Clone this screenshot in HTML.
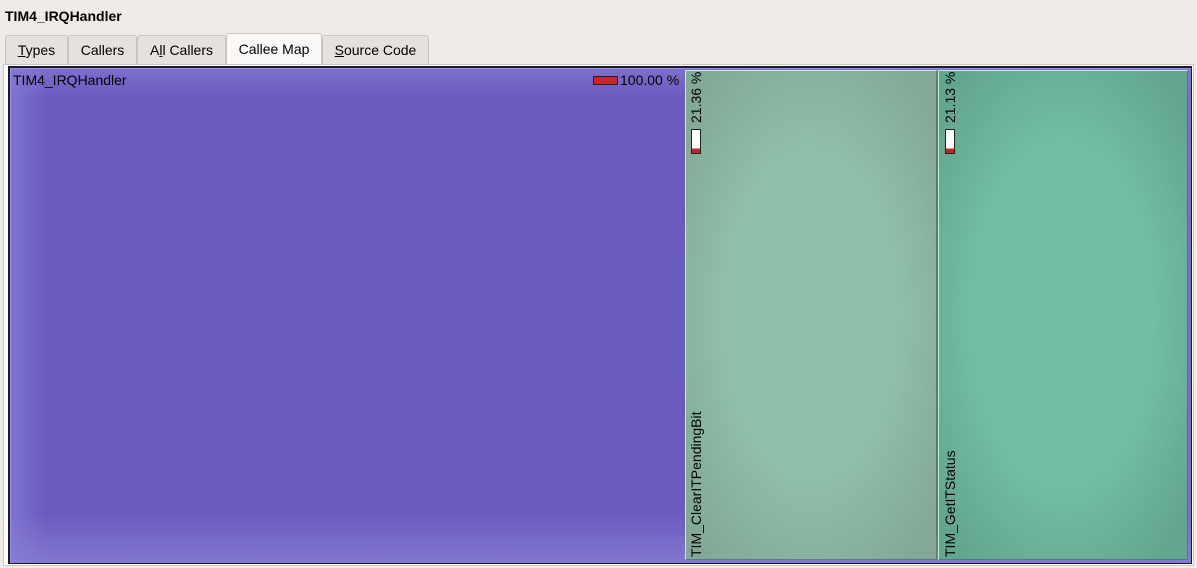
<!DOCTYPE html><html><head><style>
body{margin:0;width:1197px;height:568px;background:#efebe7;font-family:"Liberation Sans","DejaVu Sans",sans-serif;position:relative;overflow:hidden;color:#000}
.title{position:absolute;left:5px;top:8px;font-size:14px;font-weight:bold}
.tab{position:absolute;top:35px;height:29px;border:1px solid #c8c4bf;border-bottom:none;border-radius:3px 3px 0 0;background:#e5e1dd;font-size:14px;text-align:center;line-height:29px;box-sizing:border-box}
.tab.act{top:33px;height:32px;background:#fbfaf9;line-height:30px}
.frame{position:absolute;left:3px;top:64px;width:1191px;height:502px;border:1px solid #c9c5c0;box-sizing:border-box;background:#fff}
.map{position:absolute;left:8px;top:66px;width:1184px;height:498px;border:2px solid #1a1a2a;box-sizing:border-box;background:#6a5bbf}
.cush{position:absolute}
.p{left:0;top:0;width:1180px;height:494px;background:linear-gradient(90deg,rgba(140,130,215,.6),rgba(0,0,0,0) 3%,rgba(0,0,0,0) 97%,rgba(140,130,215,.5)),linear-gradient(180deg,rgba(140,130,215,.5),rgba(0,0,0,0) 6%,rgba(0,0,0,0) 90%,rgba(140,130,215,.7)),#6a5bbf;border-left:1px solid #9a8fe0;border-top:1px solid #9a8fe0}
.g1{left:675px;top:2px;width:252px;height:490px;background:radial-gradient(ellipse 65% 62% at 50% 50%,#8fbea9 55%,#82a996 100%);border:1px solid #cfe8dc;border-right-color:#5f7d6d;border-bottom-color:#5f7d6d;box-sizing:border-box}
.g2{left:928px;top:2px;width:250px;height:490px;background:radial-gradient(ellipse 65% 62% at 50% 50%,#72bea4 55%,#63a68e 100%);border:1px solid #c7eadd;border-right-color:#4e7f6d;border-bottom-color:#4e7f6d;box-sizing:border-box}
.lbl{font-size:14px;position:absolute;white-space:nowrap}
.v{transform:rotate(-90deg);transform-origin:0 0}
.bar{position:absolute;border:1px solid #222;background:#fff;box-sizing:border-box}
</style></head><body>
<div class="title">TIM4_IRQHandler</div>
<div class="tab" style="left:5px;width:63px"><u>T</u>ypes</div>
<div class="tab" style="left:68px;width:69px">Callers</div>
<div class="tab" style="left:137px;width:89px">A<u>l</u>l Callers</div>
<div class="tab act" style="left:226px;width:96px">Callee Map</div>
<div class="tab" style="left:322px;width:107px"><u>S</u>ource Code</div>
<div class="frame"></div>
<div class="map">
 <div class="cush p"></div>
 <div class="lbl" style="left:3px;top:4px">TIM4_IRQHandler</div>
 <div class="bar" style="left:583px;top:8px;width:25px;height:9px;background:#c0282a"></div>
 <div class="lbl" style="left:610px;top:4px">100.00 %</div>
 <div class="cush g1"></div>
 <div class="cush g2"></div>
 <div class="lbl v" style="left:678px;top:55px">21.36 %</div>
 <div class="bar" style="left:681px;top:61px;width:10px;height:25px;background:linear-gradient(#fff 80%,#c0282a 80%)"></div>
 <div class="lbl v" style="left:678px;top:489px">TIM_ClearITPendingBit</div>
 <div class="lbl v" style="left:932px;top:55px">21.13 %</div>
 <div class="bar" style="left:935px;top:61px;width:10px;height:25px;background:linear-gradient(#fff 80%,#c0282a 80%)"></div>
 <div class="lbl v" style="left:932px;top:489px">TIM_GetITStatus</div>
</div>
</body></html>
